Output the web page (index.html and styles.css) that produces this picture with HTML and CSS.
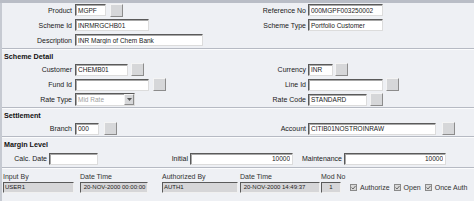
FILE: index.html
```html
<!DOCTYPE html>
<html lang="en">
<head>
    <meta charset="UTF-8">
    <title>Margin Scheme</title>
    <link rel="stylesheet" href="styles.css">
</head>
<body>
    <div class="top-bar"></div>
    <div class="form">
        <!-- header -->
        <div class="block head">
            <div class="row">
                <div class="half left"><span class="lbl">Product</span><input class="fld" style="width:31px" value="MGPF"><button class="lov" style="margin-left:4px"></button></div>
                <div class="half right"><span class="lbl">Reference No</span><input class="fld" style="width:75px" value="000MGPF003250002"></div>
            </div>
            <div class="row">
                <div class="half left"><span class="lbl">Scheme Id</span><input class="fld" style="width:74px" value="INRMRGCHB01"></div>
                <div class="half right"><span class="lbl">Scheme Type</span><input class="fld" style="width:75px" value="Portfolio Customer"></div>
            </div>
            <div class="row">
                <div class="half left"><span class="lbl">Description</span><input class="fld" style="width:128px" value="INR Margin of Chem Bank"></div>
            </div>
        </div>

        <!-- scheme detail -->
        <div class="block section">
            <div class="section-title">Scheme Detail</div>
            <div class="row tall">
                <div class="half left"><span class="lbl">Customer</span><input class="fld" style="width:53px" value="CHEMB01"><button class="lov" style="margin-left:3px"></button></div>
                <div class="half right"><span class="lbl">Currency</span><input class="fld" style="width:25px" value="INR"><button class="lov" style="margin-left:2px"></button></div>
            </div>
            <div class="row tall">
                <div class="half left"><span class="lbl">Fund Id</span><input class="fld" style="width:74px" value=""><button class="lov" style="margin-left:4px"></button></div>
                <div class="half right"><span class="lbl">Line Id</span><input class="fld" style="width:75px" value=""><button class="lov" style="margin-left:3px"></button></div>
            </div>
            <div class="row tall">
                <div class="half left"><span class="lbl">Rate Type</span>
                    <div class="select" style="width:60px"><span class="select-text">Mid Rate</span><span class="select-btn"><svg width="5" height="3" viewBox="0 0 5 3"><path d="M0 0h5L2.5 3z" fill="#555"/></svg></span></div>
                </div>
                <div class="half right"><span class="lbl">Rate Code</span><input class="fld" style="width:59px" value="STANDARD"><button class="lov" style="margin-left:3px"></button></div>
            </div>
        </div>

        <!-- settlement -->
        <div class="block section">
            <div class="section-title">Settlement</div>
            <div class="row tall">
                <div class="half left"><span class="lbl">Branch</span><input class="fld" style="width:24px" value="000"><button class="lov" style="margin-left:5px"></button></div>
                <div class="half right"><span class="lbl">Account</span><input class="fld" style="width:128px" value="CITIB01NOSTROINRAW"><button class="lov" style="margin-left:6px"></button></div>
            </div>
        </div>

        <!-- margin level -->
        <div class="block section">
            <div class="section-title">Margin Level</div>
            <div class="row margin-row">
                <span class="lbl2" style="width:45px">Calc. Date</span><input class="fld" style="width:49px" value="">
                <span class="lbl2" style="width:90px">Initial</span><input class="fld num" style="width:103px" value="10000">
                <span class="lbl2" style="width:49px">Maintenance</span><input class="fld num" style="width:102px" value="10000">
            </div>
        </div>

        <!-- audit -->
        <div class="block section audit">
            <div class="audit-grid">
                <div class="cell" style="width:77px"><div class="audit-lbl">Input By</div><div class="ro" style="width:71px">USER1</div></div>
                <div class="cell" style="width:82px"><div class="audit-lbl">Date Time</div><div class="ro" style="width:68px">&nbsp;20-NOV-2000 00:00:00</div></div>
                <div class="cell" style="width:78px"><div class="audit-lbl">Authorized By</div><div class="ro" style="width:76px">AUTH1</div></div>
                <div class="cell" style="width:81px"><div class="audit-lbl">Date Time</div><div class="ro" style="width:80px">&nbsp;20-NOV-2000 14:49:37</div></div>
                <div class="cell" style="width:29px"><div class="audit-lbl">Mod No</div><div class="ro center" style="width:20px">1</div></div>
                <div class="checks">
                    <span class="chk"><svg width="7" height="7" viewBox="0 0 7 7"><rect x="0.5" y="0.5" width="6" height="6" fill="#d8d8d8" stroke="#8a8a8a"/><path d="M1.5 3.5l1.5 1.5 2.5-3" fill="none" stroke="#6a6a6a" stroke-width="1"/></svg>Authorize</span>
                    <span class="chk"><svg width="7" height="7" viewBox="0 0 7 7"><rect x="0.5" y="0.5" width="6" height="6" fill="#d8d8d8" stroke="#8a8a8a"/><path d="M1.5 3.5l1.5 1.5 2.5-3" fill="none" stroke="#6a6a6a" stroke-width="1"/></svg>Open</span>
                    <span class="chk"><svg width="7" height="7" viewBox="0 0 7 7"><rect x="0.5" y="0.5" width="6" height="6" fill="#d8d8d8" stroke="#8a8a8a"/><path d="M1.5 3.5l1.5 1.5 2.5-3" fill="none" stroke="#6a6a6a" stroke-width="1"/></svg>Once Auth</span>
                </div>
            </div>
        </div>
    </div>
</body>
</html>
```

FILE: styles.css
```css
html, body {
    margin: 0;
    padding: 0;
}
body {
    width: 474px;
    height: 201px;
    overflow: hidden;
    background-color: #eef0f4;
    font-family: "Liberation Sans", Arial, sans-serif;
    font-size: 7px;
    color: #1a1a1a;
}
.top-bar {
    height: 3px;
    background-color: #b9bdc6;
}
.form {
    border-left: 2px solid #c6cad2;
    height: 198px;
}
.block {
    display: flex;
    flex-direction: column;
}
.head {
    gap: 1px;
    padding-bottom: 1px;
}
.section {
    border-top: 1px solid #b6bac3;
    box-shadow: inset 0 1px 0 #fbfcfd;
}
.section-title {
    height: 11px;
    line-height: 11px;
    padding: 2px 0 0 2px;
    font-weight: bold;
    font-size: 7.2px;
    color: #111;
}
.row {
    display: flex;
    align-items: center;
    height: 14px;
}
.row.tall {
    height: 15px;
}
.half {
    display: flex;
    align-items: center;
}
.half.left {
    width: 232px;
}
.half.left .lbl {
    width: 70px;
    margin-right: 3px;
}
.half.right .lbl {
    width: 72px;
    margin-right: 2px;
}
.lbl, .lbl2 {
    text-align: right;
    white-space: nowrap;
}
.lbl2 {
    margin-right: 2px;
}
.fld {
    box-sizing: border-box;
    height: 12px;
    margin: 0;
    padding: 0 2px;
    font-family: "Liberation Sans", Arial, sans-serif;
    font-size: 6.5px;
    color: #222;
    background-color: #fff;
    border: 1px solid;
    border-color: #5a5a5a #dcdcdc #dcdcdc #5a5a5a;
    box-shadow: inset 1px 1px 0 #a8a8a8;
    outline: none;
}
.fld.num {
    text-align: right;
}
.lov {
    box-sizing: border-box;
    width: 13px;
    height: 13px;
    padding: 0;
    background-color: #d6d7d9;
    border: 1px solid;
    border-color: #f4f4f4 #8c8c8c #8c8c8c #f4f4f4;
}
.select {
    box-sizing: border-box;
    height: 13px;
    display: flex;
    align-items: center;
    justify-content: space-between;
    background-color: #fff;
    border: 1px solid;
    border-color: #5a5a5a #dcdcdc #dcdcdc #5a5a5a;
    box-shadow: inset 1px 1px 0 #a8a8a8;
}
.select-text {
    padding-left: 2px;
    font-size: 6.5px;
    color: #a0a0a0;
}
.select-btn {
    box-sizing: border-box;
    width: 10px;
    height: 11px;
    display: flex;
    align-items: center;
    justify-content: center;
    background-color: #d6d7d9;
    border: 1px solid;
    border-color: #f4f4f4 #8c8c8c #8c8c8c #f4f4f4;
}
.margin-row {
    height: 17px;
    padding-left: 0;
}
.audit-grid {
    display: flex;
    align-items: flex-end;
    padding: 3px 0 0 1px;
}
.cell {
    display: flex;
    flex-direction: column;
}
.audit-lbl {
    height: 11px;
    line-height: 11px;
    color: #333;
}
.ro {
    box-sizing: border-box;
    height: 11px;
    line-height: 9px;
    padding: 0 1px;
    font-size: 6px;
    color: #222;
    background-color: #d6d6d8;
    border: 1px solid;
    border-color: #5a5a5a #f0f0f0 #f0f0f0 #5a5a5a;
    white-space: nowrap;
    overflow: hidden;
}
.ro.center {
    text-align: center;
}
.checks {
    display: flex;
    gap: 4px;
    height: 11px;
    align-items: center;
    padding-left: 0;
}
.chk {
    display: flex;
    align-items: center;
    gap: 3px;
    color: #333;
}
```
